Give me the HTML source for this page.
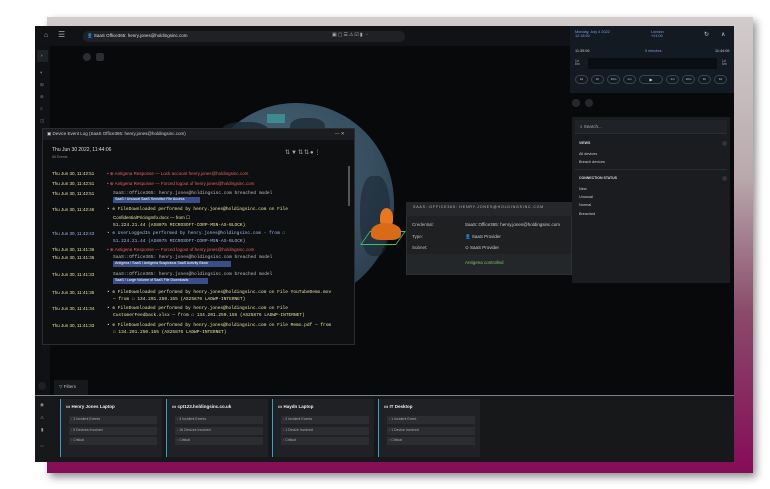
<!DOCTYPE html>
<html><head><meta charset="utf-8"><style>
*{margin:0;padding:0;box-sizing:border-box}
body{width:770px;height:489px;background:#fff;position:relative;overflow:hidden;font-family:"Liberation Sans",sans-serif;color:#cfd3d8}
.abs{position:absolute}
.back{left:47px;top:17px;width:706px;height:456px;background:linear-gradient(180deg,#d2cccc 0%,#b9a9ad 35%,#8a4a6a 65%,#860b58 100%);box-shadow:3px 4px 8px rgba(0,0,0,.45)}
.scr{left:35px;top:26px;width:699px;height:436px;background:#08090b;overflow:hidden}
.t{position:absolute;font-size:4.5px;white-space:nowrap;line-height:1}
.mono{font-family:"Liberation Mono",monospace}
.row{position:absolute;left:8px;width:88px;height:8px;background:#2b2d31}
</style></head><body>
<div class="abs back"></div>
<div class="abs scr">
 <div class="abs" style="left:0;top:0;width:535px;height:20px;background:#101215"></div>
 <div class="t" style="left:9px;top:6px;font-size:7px;color:#aaa">⌂</div>
 <div class="t" style="left:23px;top:5px;font-size:8px;color:#aaa">☰</div>
 <div class="abs" style="left:48px;top:5px;width:322px;height:11px;border-radius:5px;background:#1f2125"></div>
 <div class="t" style="left:52px;top:8px;color:#ddd">👤 SaaS Office365: henry.jones@holdingsinc.com</div>
 <div class="t" style="left:297px;top:7px;font-size:5px;color:#aaa;letter-spacing:1px">▣▢☰⚠☑▮ ◦</div>
 <div class="abs" style="left:0;top:20px;width:15px;height:416px;background:#0f1114"></div>
 <div class="abs" style="left:2px;top:24px;width:11px;height:12px;background:#1f2227"></div>
 <div class="t" style="left:6px;top:28px;color:#ddd">›</div>
 <div class="t" style="left:5px;top:45px;color:#777">▾</div>
 <div class="t" style="left:5px;top:57px;color:#777">⊞</div>
 <div class="t" style="left:5px;top:69px;color:#777">⊕</div>
 <div class="t" style="left:5px;top:81px;color:#777">≡</div>
 <div class="t" style="left:5px;top:93px;color:#777">◫</div>
 <div class="abs" style="left:48px;top:27px;width:8px;height:8px;border-radius:50%;background:#2a2d31"></div>
 <div class="abs" style="left:61px;top:27px;width:8px;height:8px;border-radius:2px;background:#2a2d31"></div>
 <!-- globe -->
 <div class="abs" style="left:163px;top:77px;width:196px;height:200px;border-radius:50%;background:radial-gradient(circle at 40% 35%,#4a6577 0%,#364e5f 55%,#22323e 100%)"></div>
 <div class="abs" style="left:232px;top:88px;width:18px;height:9px;background:#3a9a9a;opacity:.8"></div>
 <div class="abs" style="left:185px;top:96px;width:50px;height:28px;border-radius:40%;background:#1a2732;opacity:.8"></div>
 <div class="abs" style="left:255px;top:92px;width:35px;height:20px;border-radius:40%;background:#1a2732;opacity:.7"></div>
 <div class="abs" style="left:325px;top:150px;width:30px;height:80px;border-radius:40%;background:#1a2732;opacity:.6"></div>
 <div class="abs" style="left:170px;top:210px;width:40px;height:50px;border-radius:40%;background:#1a2732;opacity:.6"></div>
 <!-- person -->
 <div class="abs" style="left:330px;top:205px;width:36px;height:14px;border:1px solid #3fbf5f;transform:skewX(-35deg)"></div>
 <div class="abs" style="left:345px;top:182px;width:13px;height:20px;border-radius:50% 50% 40% 40%;background:#e8771f"></div>
 <div class="abs" style="left:336px;top:197px;width:30px;height:17px;border-radius:50% 50% 30% 30%;background:#d96a18"></div>
 <!-- event log window -->
 <div class="abs" style="left:7px;top:102px;width:313px;height:217px;background:#0e0f11;border:1px solid #2a2c30"></div>
 <div class="abs" style="left:8px;top:103px;width:311px;height:11px;background:#1a1c1f"></div>
 <div class="t" style="left:12px;top:106px;color:#ccc">▣ Device Event Log (SaaS Office365: henry.jones@holdingsinc.com)</div>
 <div class="t" style="left:300px;top:106px;color:#bbb">— ✕</div>
 <div class="t" style="left:17px;top:122px;font-size:5px;color:#ddd">Thu Jun 30 2022, 11:44:06</div>
 <div class="t" style="left:17px;top:130px;font-size:3.5px;color:#888">All Events</div>
 <div class="t" style="left:250px;top:124px;font-size:6px;color:#aaa;letter-spacing:1px">⇅▼⇅⇅●⋮</div>
 <div class="abs" style="left:313px;top:140px;width:2px;height:40px;background:#555"></div>
 <div style="position:absolute;left:17px;top:0;color:#ddd">
  <div class="t" style="top:146px;color:#e8e0a0">Thu Jun 30, 11:42:51</div>
  <div class="t" style="top:156px;color:#e8e0a0">Thu Jun 30, 11:42:51</div>
  <div class="t" style="top:166px;color:#e8e0a0">Thu Jun 30, 11:42:51</div>
  <div class="t" style="top:182px;color:#e8e0a0">Thu Jun 30, 11:42:46</div>
  <div class="t" style="top:206px;color:#9fb4e8">Thu Jun 30, 11:42:43</div>
  <div class="t" style="top:222px;color:#e8e0a0">Thu Jun 30, 11:41:36</div>
  <div class="t" style="top:230px;color:#e8e0a0">Thu Jun 30, 11:41:35</div>
  <div class="t" style="top:247px;color:#e8e0a0">Thu Jun 30, 11:41:33</div>
  <div class="t" style="top:265px;color:#e8e0a0">Thu Jun 30, 11:41:35</div>
  <div class="t" style="top:281px;color:#e8e0a0">Thu Jun 30, 11:41:34</div>
  <div class="t" style="top:298px;color:#e8e0a0">Thu Jun 30, 11:41:33</div>
 </div>
 <div style="position:absolute;left:72px;top:0">
  <div class="t" style="top:146px;color:#e06060">• ⊕ Antigena Response — Lock account henry.jones@holdingsinc.com</div>
  <div class="t" style="top:156px;color:#e06060">• ⊕ Antigena Response — Forced logout of henry.jones@holdingsinc.com</div>
  <div class="t mono" style="top:166px;left:6px;color:#bbb">SaaS::Office365: henry.jones@holdingsinc.com breached model</div>
  <div class="abs" style="left:6px;top:171px;width:87px;height:6px;background:#3a4e8a"></div>
  <div class="t" style="top:172px;left:8px;font-size:3.6px;color:#fff">SaaS / Unusual SaaS Sensitive File Access</div>
  <div class="t mono" style="top:182px;color:#e8e0a0">• ⊕ FileDownloaded performed by henry.jones@holdingsinc.com on File</div>
  <div class="t" style="top:190px;left:6px;color:#e8e0a0">ConfidentialPricingInfo.docx — from ☐</div>
  <div class="t mono" style="top:198px;left:6px;color:#e8e0a0">51.224.21.44 (AS8075 MICROSOFT-CORP-MSN-AS-BLOCK)</div>
  <div class="t mono" style="top:206px;color:#9fb4e8">• ⊕ UserLoggedIn performed by henry.jones@holdingsinc.com - from ☐</div>
  <div class="t mono" style="top:214px;left:6px;color:#9fb4e8">51.224.21.44 (AS8075 MICROSOFT-CORP-MSN-AS-BLOCK)</div>
  <div class="t" style="top:222px;color:#e06060">• ⊕ Antigena Response — Forced logout of henry.jones@holdingsinc.com</div>
  <div class="t mono" style="top:230px;left:6px;color:#bbb">SaaS::Office365: henry.jones@holdingsinc.com breached model</div>
  <div class="abs" style="left:6px;top:235px;width:118px;height:6px;background:#3a4e8a"></div>
  <div class="t" style="top:236px;left:8px;font-size:3.6px;color:#fff">Antigena / SaaS / Antigena Suspicious SaaS Activity Block</div>
  <div class="t mono" style="top:247px;left:6px;color:#bbb">SaaS::Office365: henry.jones@holdingsinc.com breached model</div>
  <div class="abs" style="left:6px;top:252px;width:95px;height:6px;background:#3a4e8a"></div>
  <div class="t" style="top:253px;left:8px;font-size:3.6px;color:#fff">SaaS / Large Volume of SaaS File Downloads</div>
  <div class="t mono" style="top:265px;color:#e8e0a0">• ⊕ FileDownloaded performed by henry.jones@holdingsinc.com on File YouTubeDemo.mov</div>
  <div class="t mono" style="top:272px;left:6px;color:#e8e0a0">— from ☐ 134.201.250.155 (AS25876 LADWP-INTERNET)</div>
  <div class="t mono" style="top:281px;color:#e8e0a0">• ⊕ FileDownloaded performed by henry.jones@holdingsinc.com on File</div>
  <div class="t mono" style="top:288px;left:6px;color:#e8e0a0">CustomerFeedback.xlsx — from ☐ 134.201.250.155 (AS25876 LADWP-INTERNET)</div>
  <div class="t mono" style="top:298px;color:#e8e0a0">• ⊕ FileDownloaded performed by henry.jones@holdingsinc.com on File Memo.pdf — from</div>
  <div class="t mono" style="top:305px;left:6px;color:#e8e0a0">☐ 134.201.250.155 (AS25876 LADWP-INTERNET)</div>
 </div>
 <!-- tooltip -->
 <div class="abs" style="left:371px;top:176px;width:166px;height:73px;background:#1e2022;border:1px solid #2c2f33"></div>
 <div class="abs" style="left:371px;top:176px;width:166px;height:14px;background:#25272a"></div>
 <div class="t" style="left:378px;top:180px;font-size:3.6px;letter-spacing:.8px;color:#bbb">SAAS::OFFICE365: HENRY.JONES@HOLDINGSINC.COM</div>
 <div class="t" style="left:377px;top:197px;color:#bbb">Credential:</div>
 <div class="t" style="left:430px;top:197px;color:#ccc">SaaS::Office365: henry.jones@holdingsinc.com</div>
 <div class="t" style="left:377px;top:209px;color:#bbb">Type:</div>
 <div class="t" style="left:430px;top:209px;color:#ccc">👤 SaaS Provider</div>
 <div class="t" style="left:377px;top:220px;color:#bbb">Subnet:</div>
 <div class="t" style="left:430px;top:220px;color:#ccc">⊙ SaaS Provider</div>
 <div class="abs" style="left:372px;top:228px;width:164px;height:20px;background:#232729"></div>
 <div class="t" style="left:430px;top:235px;color:#7fc06a">Antigena controlled</div>
 <!-- right panel -->
 <div class="abs" style="left:535px;top:0;width:164px;height:67px;background:#131a22"></div>
 <div class="t" style="left:540px;top:5px;font-size:3.8px;color:#7f9fe0">Monday, July 4 2022<br>12:18:50</div>
 <div class="t" style="left:616px;top:5px;font-size:3.8px;color:#7f9fe0">London<br>+01:00</div>
 <div class="t" style="left:669px;top:6px;font-size:6px;color:#ccc">↻</div>
 <div class="t" style="left:686px;top:6px;font-size:6px;color:#ccc">∧</div>
 <div class="t" style="left:540px;top:24px;font-size:3.8px;color:#ccc">11:39:06</div>
 <div class="t" style="left:610px;top:24px;font-size:3.8px;color:#7f9fe0">5 minutes</div>
 <div class="t" style="left:680px;top:24px;font-size:3.8px;color:#ccc">11:44:06</div>
 <div class="abs" style="left:553px;top:32px;width:129px;height:11px;background:#0a0d11"></div>
 <div class="t" style="left:540px;top:34px;font-size:3.3px;color:#aaa">1d<br>6m</div>
 <div class="t" style="left:687px;top:34px;font-size:3.3px;color:#aaa">1d<br>6m</div>
 <div style="position:absolute;left:540px;top:49px;display:flex;gap:3px">
  <div style="width:13px;height:9px;border:1px solid #3a4350;border-radius:5px;font-size:3px;color:#ccc;text-align:center;line-height:7px">1d</div>
  <div style="width:13px;height:9px;border:1px solid #3a4350;border-radius:5px;font-size:3px;color:#ccc;text-align:center;line-height:7px">1h</div>
  <div style="width:13px;height:9px;border:1px solid #3a4350;border-radius:5px;font-size:3px;color:#ccc;text-align:center;line-height:7px">10m</div>
  <div style="width:13px;height:9px;border:1px solid #3a4350;border-radius:5px;font-size:3px;color:#ccc;text-align:center;line-height:7px">1m</div>
  <div style="width:24px;height:9px;border:1px solid #3a4350;border-radius:5px;font-size:4px;color:#ddd;text-align:center;line-height:7px">▶</div>
  <div style="width:13px;height:9px;border:1px solid #3a4350;border-radius:5px;font-size:3px;color:#ccc;text-align:center;line-height:7px">1m</div>
  <div style="width:13px;height:9px;border:1px solid #3a4350;border-radius:5px;font-size:3px;color:#ccc;text-align:center;line-height:7px">10m</div>
  <div style="width:13px;height:9px;border:1px solid #3a4350;border-radius:5px;font-size:3px;color:#ccc;text-align:center;line-height:7px">1h</div>
  <div style="width:13px;height:9px;border:1px solid #3a4350;border-radius:5px;font-size:3px;color:#ccc;text-align:center;line-height:7px">1d</div>
 </div>
 <div class="abs" style="left:537px;top:73px;width:8px;height:8px;border-radius:50%;background:#25282c"></div>
 <div class="abs" style="left:550px;top:73px;width:8px;height:8px;border-radius:50%;background:#25282c"></div>
 <div class="abs" style="left:537px;top:91px;width:158px;height:166px;background:#1a1c1f"></div>
 <div class="abs" style="left:540px;top:94px;width:152px;height:14px;background:#1f2226;border-bottom:1px solid #2a2d31"></div>
 <div class="t" style="left:545px;top:99px;color:#aaa">⌕ Search...</div>
 <div class="t" style="left:544px;top:116px;font-size:3.5px;color:#ddd;font-weight:bold">VIEWS</div>
 <div class="abs" style="left:687px;top:115px;width:5px;height:5px;border-radius:50%;background:#333"></div>
 <div class="t" style="left:544px;top:127px;font-size:3.8px;color:#ccc">All devices</div>
 <div class="t" style="left:544px;top:135px;font-size:3.8px;color:#ccc">Breach devices</div>
 <div class="abs" style="left:540px;top:143px;width:152px;height:1px;background:#2a2d31"></div>
 <div class="t" style="left:544px;top:151px;font-size:3.5px;color:#ddd;font-weight:bold">CONNECTION STATUS</div>
 <div class="abs" style="left:687px;top:150px;width:5px;height:5px;border-radius:50%;background:#333"></div>
 <div class="t" style="left:544px;top:162px;font-size:3.8px;color:#ccc">New</div>
 <div class="t" style="left:544px;top:170px;font-size:3.8px;color:#ccc">Unusual</div>
 <div class="t" style="left:544px;top:178px;font-size:3.8px;color:#ccc">Normal</div>
 <div class="t" style="left:544px;top:187px;font-size:3.8px;color:#ccc">Breached</div>
 <!-- bottom -->
 <div class="abs" style="left:3px;top:356px;width:8px;height:8px;border-radius:50%;background:#1d2024"></div>
 <div class="abs" style="left:19px;top:354px;width:34px;height:15px;background:#16181b"></div>
 <div class="t" style="left:24px;top:359px;color:#bbb">▽ Filters</div>
 <div class="abs" style="left:0;top:369px;width:699px;height:1px;background:#7a7f8a"></div>
 <div class="abs" style="left:0;top:370px;width:699px;height:66px;background:#17181a"></div>
 <div class="t" style="left:5px;top:377px;color:#999">◉</div>
 <div class="t" style="left:5px;top:390px;color:#999">⚠</div>
 <div class="t" style="left:6px;top:402px;color:#999">▮</div>
 <div class="t" style="left:5px;top:418px;color:#666">▭</div>
 <div class="abs" style="left:25px;top:373px;width:102px;height:58px;background:#202124;border-left:1px solid #2fa3c0">
  <div class="t" style="left:5px;top:6px;color:#eee;font-weight:bold">▭ Henry Jones Laptop</div>
  <div class="row" style="top:17px"></div><div class="t" style="left:10px;top:19px;font-size:3.5px;color:#aaa">▫ 3 Incident Events</div>
  <div class="row" style="top:28px"></div><div class="t" style="left:10px;top:30px;font-size:3.5px;color:#aaa">▫ 5 Devices Involved</div>
  <div class="row" style="top:38px"></div><div class="t" style="left:10px;top:40px;font-size:3.5px;color:#aaa">▫ Critical</div>
 </div>
 <div class="abs" style="left:131px;top:373px;width:102px;height:58px;background:#202124;border-left:1px solid #2fa3c0">
  <div class="t" style="left:5px;top:6px;color:#eee;font-weight:bold">▭ cpt123.holdingsinc.co.uk</div>
  <div class="row" style="top:17px"></div><div class="t" style="left:10px;top:19px;font-size:3.5px;color:#aaa">▫ 3 Incident Events</div>
  <div class="row" style="top:28px"></div><div class="t" style="left:10px;top:30px;font-size:3.5px;color:#aaa">▫ 16 Devices Involved</div>
  <div class="row" style="top:38px"></div><div class="t" style="left:10px;top:40px;font-size:3.5px;color:#aaa">▫ Critical</div>
 </div>
 <div class="abs" style="left:237px;top:373px;width:102px;height:58px;background:#202124;border-left:1px solid #2fa3c0">
  <div class="t" style="left:5px;top:6px;color:#eee;font-weight:bold">▭ Haydn Laptop</div>
  <div class="row" style="top:17px"></div><div class="t" style="left:10px;top:19px;font-size:3.5px;color:#aaa">▫ 2 Incident Events</div>
  <div class="row" style="top:28px"></div><div class="t" style="left:10px;top:30px;font-size:3.5px;color:#aaa">▫ 1 Device Involved</div>
  <div class="row" style="top:38px"></div><div class="t" style="left:10px;top:40px;font-size:3.5px;color:#aaa">▫ Critical</div>
 </div>
 <div class="abs" style="left:343px;top:373px;width:102px;height:58px;background:#202124;border-left:1px solid #2fa3c0">
  <div class="t" style="left:5px;top:6px;color:#eee;font-weight:bold">▭ IT Desktop</div>
  <div class="row" style="top:17px"></div><div class="t" style="left:10px;top:19px;font-size:3.5px;color:#aaa">▫ 1 Incident Event</div>
  <div class="row" style="top:28px"></div><div class="t" style="left:10px;top:30px;font-size:3.5px;color:#aaa">▫ 1 Device Involved</div>
  <div class="row" style="top:38px"></div><div class="t" style="left:10px;top:40px;font-size:3.5px;color:#aaa">▫ Critical</div>
 </div>
</div>
</body></html>
